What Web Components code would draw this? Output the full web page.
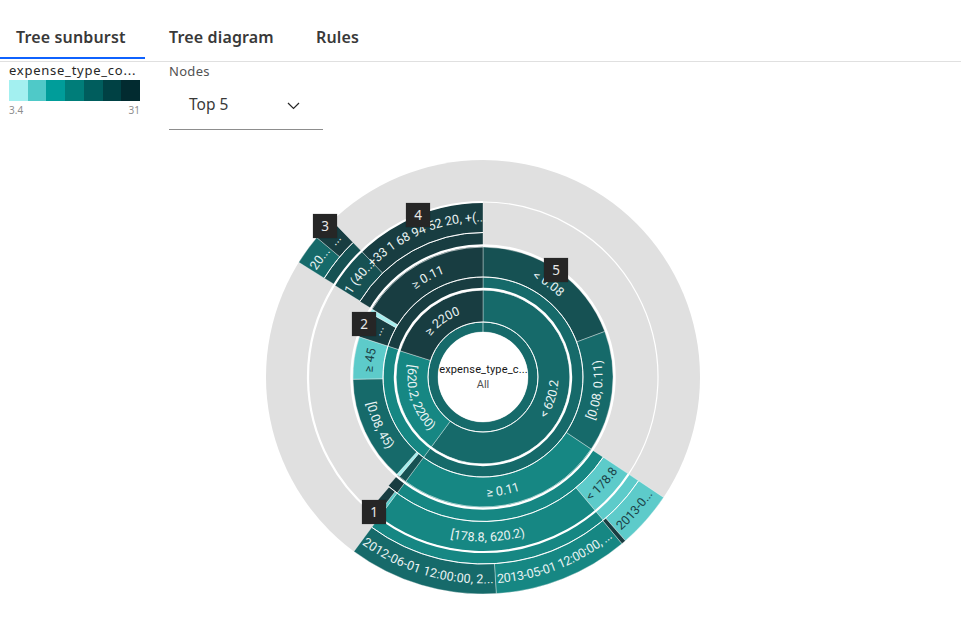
<!DOCTYPE html>
<html><head><meta charset="utf-8"><title>Tree sunburst</title>
<style>html,body{margin:0;background:#fff;width:961px;height:631px;overflow:hidden;font-family:"Noto Sans","Liberation Sans",sans-serif}</style>
</head><body>
<tree-view>
  <tab-bar>
    <tab-item active style="--w:145px">Tree sunburst</tab-item>
    <tab-item style="--w:139px">Tree diagram</tab-item>
    <tab-item style="--w:76px">Rules</tab-item>
  </tab-bar>
  <control-row>
    <color-legend title-text="expense_type_co..." min="3.4" max="31"></color-legend>
    <node-select label="Nodes" value="Top 5"></node-select>
  </control-row>
  <sunburst-chart>
    <num-badge style="left:362px;top:370px">1</num-badge>
    <num-badge style="left:352px;top:182px">2</num-badge>
    <num-badge style="left:313px;top:84px">3</num-badge>
    <num-badge style="left:406px;top:73px">4</num-badge>
    <num-badge style="left:544px;top:128px">5</num-badge>
  </sunburst-chart>
</tree-view>
<script>
const def=(n,html,extra)=>customElements.define(n,class extends HTMLElement{constructor(){super();this.attachShadow({mode:'open'}).innerHTML=html;}connectedCallback(){extra&&extra(this)}});
def('tree-view','<style>:host{display:block;width:961px;height:631px}</style><slot></slot>');
def('tab-bar','<style>:host{display:flex;height:61px;border-bottom:1px solid #e0e0e0;gap:8px}</style><slot></slot>');
customElements.define('tab-item',class extends HTMLElement{constructor(){super();this.attachShadow({mode:'open'}).innerHTML=`<style>
:host{display:block;width:var(--w);box-sizing:border-box;height:59px;padding:25px 0 0 16px;font:600 16px/24px "Noto Sans",sans-serif;color:#393939;letter-spacing:.15px;border-bottom:2px solid transparent;white-space:nowrap}
:host([active]){border-bottom-color:#0f62fe}
</style><slot></slot>`}});
def('control-row','<style>:host{display:flex;height:68px;padding-left:9px;gap:29px}</style><slot></slot>');
customElements.define('color-legend',class extends HTMLElement{connectedCallback(){
 const c=['#a3f0f0','#4fc9c8','#009d9a','#007d79','#005d5d','#004144','#022b30'];
 this.attachShadow({mode:'open'}).innerHTML=`<style>
:host{display:block;width:131px;font-family:"Noto Sans",sans-serif}
.t{font-size:13px;line-height:16px;height:18px;color:#262626;letter-spacing:.75px;white-space:nowrap}
.s{display:grid;grid-template-columns:repeat(7,1fr);height:21px}
.k{display:flex;justify-content:space-between;font-size:10px;line-height:14px;color:#8d8d8d;margin-top:2px}
</style><div class="t">${this.getAttribute('title-text')}</div><div class="s">${c.map(x=>`<i style="background:${x}"></i>`).join('')}</div><div class="k"><span>${this.getAttribute('min')}</span><span>${this.getAttribute('max')}</span></div>`}});
customElements.define('node-select',class extends HTMLElement{connectedCallback(){
 this.attachShadow({mode:'open'}).innerHTML=`<style>
:host{display:block;width:154px;padding-top:1px;font-family:"Noto Sans",sans-serif}
.l{font-size:13px;line-height:16px;color:#525252;letter-spacing:.3px}
.b{display:flex;align-items:center;justify-content:space-between;height:50px;padding:0 23px 0 20px;border-bottom:1px solid #8d8d8d;font-size:15.5px;color:#393939}
svg{display:block;margin-top:3px}
</style><div class="l">${this.getAttribute('label')}</div><div class="b"><span>${this.getAttribute('value')}</span><svg width="13" height="8" viewBox="0 0 13 8"><path d="M1 1l5.5 5.5L12 1" fill="none" stroke="#262626" stroke-width="1.2"/></svg></div>`}});
def('num-badge','<style>:host{position:absolute;width:24px;height:24px;background:#262626;color:#e8e8e8;font:13.5px/24px "Noto Sans",sans-serif;text-align:center;box-shadow:0 0 1px rgba(0,0,0,.5)}</style><slot></slot>');

const C={d:'#022b30',n:'#004144',t:'#005d5d',m:'#007d79',c:'#4fc9c8',l:'#9ef0f0'};
const pt=(r,a)=>{const t=a*Math.PI/180;return [(r*Math.sin(t)).toFixed(2),(-r*Math.cos(t)).toFixed(2)]};
const wedge=(r0,r1,a0,a1,k)=>{const l=a1-a0>180?1:0,[x0,y0]=pt(r1,a0),[x1,y1]=pt(r1,a1),[x2,y2]=pt(r0,a1),[x3,y3]=pt(r0,a0);
 return `<path fill="${C[k]}" fill-opacity=".9" stroke="#fff" stroke-opacity=".5" stroke-width=".7" d="M${x0} ${y0}A${r1} ${r1} 0 ${l} 1 ${x1} ${y1}L${x2} ${y2}A${r0} ${r0} 0 ${l} 0 ${x3} ${y3}Z"/>`};
const arc=(r,a0,a1,w)=>{const l=a1-a0>180?1:0,[x0,y0]=pt(r,a0),[x1,y1]=pt(r,a1);return `<path fill="none" stroke="#fff" stroke-width="${w}" d="M${x0} ${y0}A${r} ${r} 0 ${l} 1 ${x1} ${y1}"/>`};
const W=[
 [45,55,0,359.99,'t'],
 [55,87,0,216.5,'t'],[55,87,216.5,287.5,'m'],[55,87,287.5,360,'d'],
 [87,100,0,216.5,'t'],[87,100,216.5,288,'m'],[87,100,288,360,'d'],
 [100,130,0,69.5,'n'],[100,130,69.5,123.7,'t'],[100,130,123.7,216.5,'m'],[100,130,216.5,220,'n'],[100,130,220,221.5,'l'],[100,130,221.5,269,'t'],[100,130,269,288,'c'],[100,130,288,299.5,'d'],[100,130,299.5,301.5,'l'],[100,130,301.5,360,'d'],
 [130,144.5,123.7,216.5,'m'],[130,144.5,216.5,221,'d'],[130,144.5,301.5,360,'d'],
 [144.5,175,123.7,140,'c'],[144.5,175,140,216.5,'m'],[144.5,175,216.5,217.5,'c'],[144.5,175,217.5,220.5,'d'],[144.5,175,301.7,316,'n'],[144.5,175,316,360,'d'],
 [175,187,123.7,140,'c'],[175,187,140,216.5,'m'],[175,187,301.9,316,'n'],
 [187,217,123.7,139,'c'],[187,217,139,140.2,'d'],[187,217,140.2,176.5,'m'],[187,217,176.5,216.5,'t'],[187,217,301.9,310,'t'],[187,217,310,316,'d']
];
const T='#eaf3f3',D='#1b4045';
const L=[
 ['≥ 2200',71,324,T],['[620.2, 2200)',71,252,T],['< 620.2',71,108,T],
 ['≥ 0.11',115,331,T],['...',115,294,T],['≥ 45',115,278.5,D],['[0.08, 45)',115,245,T],['≥ 0.11',115,170,T],['[0.08, 0.11)',115,96.6,T],['< 0.08',115,35,T],
 ['+33 1 68 94 52 20, +(...',160,338,T,12.5,126],['1 (40...',160,309,T],['< 178.8',160,132,D],['[178.8, 620.2)',160,178.3,T],
 ['2012-06-01 12:00:00, 2...',202,196.5,T,12.5,140],['2013-05-01 12:00:00, ...',202,158.5,T,12.5,126],['2013-0...',202,131.3,D],['20...',202,306,T],['...',202,313,T]
];
customElements.define('sunburst-chart',class extends HTMLElement{connectedCallback(){
 let defs='',txt='';
 L.forEach(([s,r,a,col,fs,len],i)=>{
  const cw=a<90||a>270, rb=cw?r-4.4:r+4.4, sp=Math.min(85,100/rb*180/Math.PI*1.2);
  const a0=cw?a-sp:a+sp,a1=cw?a+sp:a-sp,[x0,y0]=pt(rb,a0),[x1,y1]=pt(rb,a1);
  defs+=`<path id="p${i}" d="M${x0} ${y0}A${rb} ${rb} 0 0 ${cw?1:0} ${x1} ${y1}"/>`;
  txt+=`<text fill="${col}" font-size="${fs||12.5}" text-anchor="middle"${len?` textLength="${len}"`:''}><textPath href="#p${i}" startOffset="50%">${s.replace('<','&lt;')}</textPath></text>`;
 });
 this.attachShadow({mode:'open'}).innerHTML=`<style>
:host{display:block;position:relative;height:501px}
.w{display:flex;justify-content:center;padding:24.5px 0 0 5px}
svg{display:block;overflow:visible;font-family:Roboto,sans-serif}
</style><div class="w"><svg width="444" height="444" viewBox="-222 -222 444 444"><defs>${defs}</defs>
<circle r="217" fill="#e0e0e0"/>
${W.map(w=>wedge(...w)).join('')}
<circle r="45" fill="#fff"/>
${arc(55,0,359.99,1)}${arc(88,0,359.99,2.4)}${arc(100,0,359.99,1)}${arc(131.5,0,359.99,2.4)}
${arc(144.5,123.7,221,1)}${arc(144.5,301.5,360,1)}
${arc(175,0,123.7,1.2)}${arc(175,123.7,360,2.2)}
${arc(187,123.7,216.5,1)}${arc(187,301.9,316,1)}
${txt}
<text text-anchor="middle" x=".5" y="-4" font-size="11" fill="#161616" letter-spacing=".15">expense_type_c...</text>
<text text-anchor="middle" y="11" font-size="11" fill="#525252">All</text>
</svg></div><slot></slot>`;
}});
</script>
</body></html>
